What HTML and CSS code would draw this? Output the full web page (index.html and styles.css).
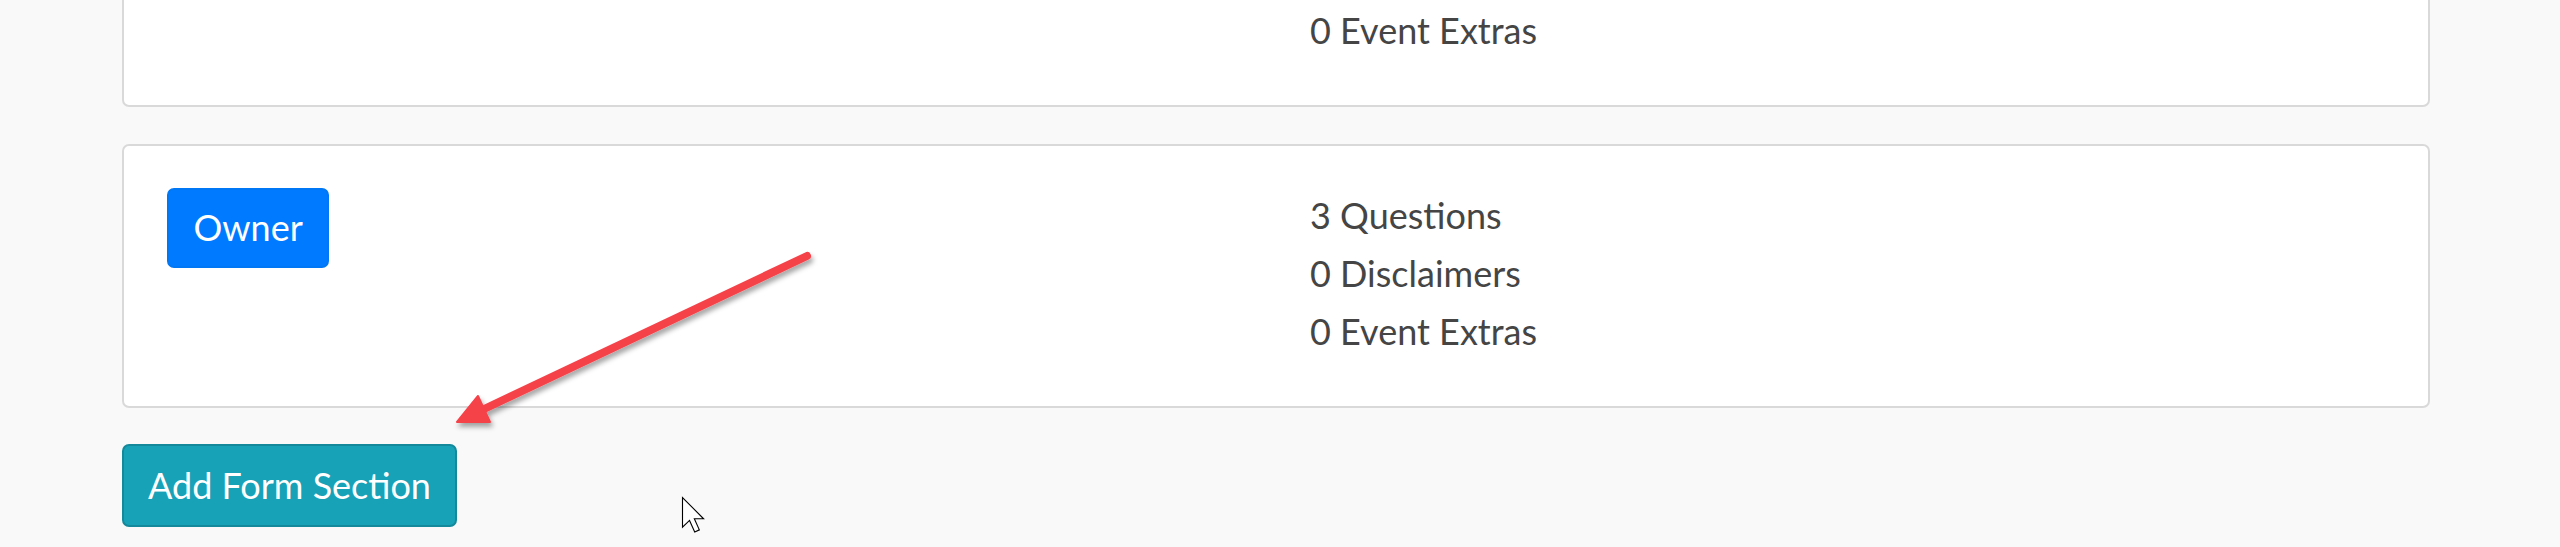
FILE: index.html
```html
<!DOCTYPE html>
<html lang="en">
<head>
<meta charset="utf-8">
<title>Form Sections</title>
<link rel="stylesheet" href="styles.css">
</head>
<body>
<main class="page">
  <section class="card">
    <div class="card-row">
      <div class="card-name"></div>
      <ul class="counts">
        <li>0 Event Extras</li>
      </ul>
    </div>
  </section>
  <section class="card">
    <div class="card-row">
      <div class="card-name"><button class="btn btn-primary">Owner</button></div>
      <ul class="counts">
        <li>3 Questions</li>
        <li>0 Disclaimers</li>
        <li>0 Event Extras</li>
      </ul>
    </div>
  </section>
  <div class="actions">
    <button class="btn btn-info">Add Form Section</button>
  </div>
</main>
<svg class="overlay" width="2560" height="547" viewBox="0 0 2560 547" aria-hidden="true">
  <defs>
    <filter id="sh" x="-20%" y="-20%" width="140%" height="140%">
      <feDropShadow dx="2" dy="4" stdDeviation="2.5" flood-color="#000" flood-opacity="0.35"/>
    </filter>
  </defs>
  <g filter="url(#sh)" fill="#f5424a" stroke="#f5424a">
    <line x1="807" y1="256" x2="482" y2="410" stroke-width="8" stroke-linecap="round"/>
    <polygon points="457,422 478,396 490,422" stroke-width="2" stroke-linejoin="round"/>
  </g>
  <path transform="translate(682.5 497.5) scale(1.85)" d="M0 0 L0 16 L3.8 12.4 L6.6 18.6 L9.1 17.5 L6.4 11.5 L11.4 11.5 Z" fill="#fff" stroke="#000" stroke-width="0.6" stroke-linejoin="miter"/>
</svg>
</body>
</html>
```
FILE: styles.css
```css
html, body {
  margin: 0;
  padding: 0;
  background: #f9f9f9;
  overflow: hidden;
}
body {
  width: 2560px;
  height: 547px;
  position: relative;
  font-family: "Lato", "Open Sans", sans-serif;
  color: #454545;
}
.page {
  margin-top: -41px;
  padding: 0 130px 0 122px;
  display: flex;
  flex-direction: column;
  gap: 37px;
}
.card {
  background: #fff;
  border: 2px solid #d9d9d9;
  border-radius: 7px;
  padding: 42px 43px 44px;
}
.card-row {
  display: grid;
  grid-template-columns: 1fr 1fr;
  column-gap: 68px;
  align-items: start;
}
.counts {
  list-style: none;
  margin: -2px 0 2px;
  padding: 0;
  font-size: 36px;
  line-height: 58px;
}
.btn {
  font-family: "Lato", "Open Sans", sans-serif;
  font-size: 36px;
  line-height: 43px;
  color: #fff;
  border: 2px solid transparent;
  border-radius: 7px;
  cursor: pointer;
  margin: 0;
}
.btn-primary {
  background: #007bff;
  border-color: #0077f5;
  padding: 16px 24.5px 17px;
}
.btn-info {
  background: #17a2b8;
  border-color: #13899b;
  padding: 18px 24px;
}
.actions {
  display: flex;
  margin-top: -1px;
}
.overlay {
  position: absolute;
  left: 0;
  top: 0;
  pointer-events: none;
}
```
